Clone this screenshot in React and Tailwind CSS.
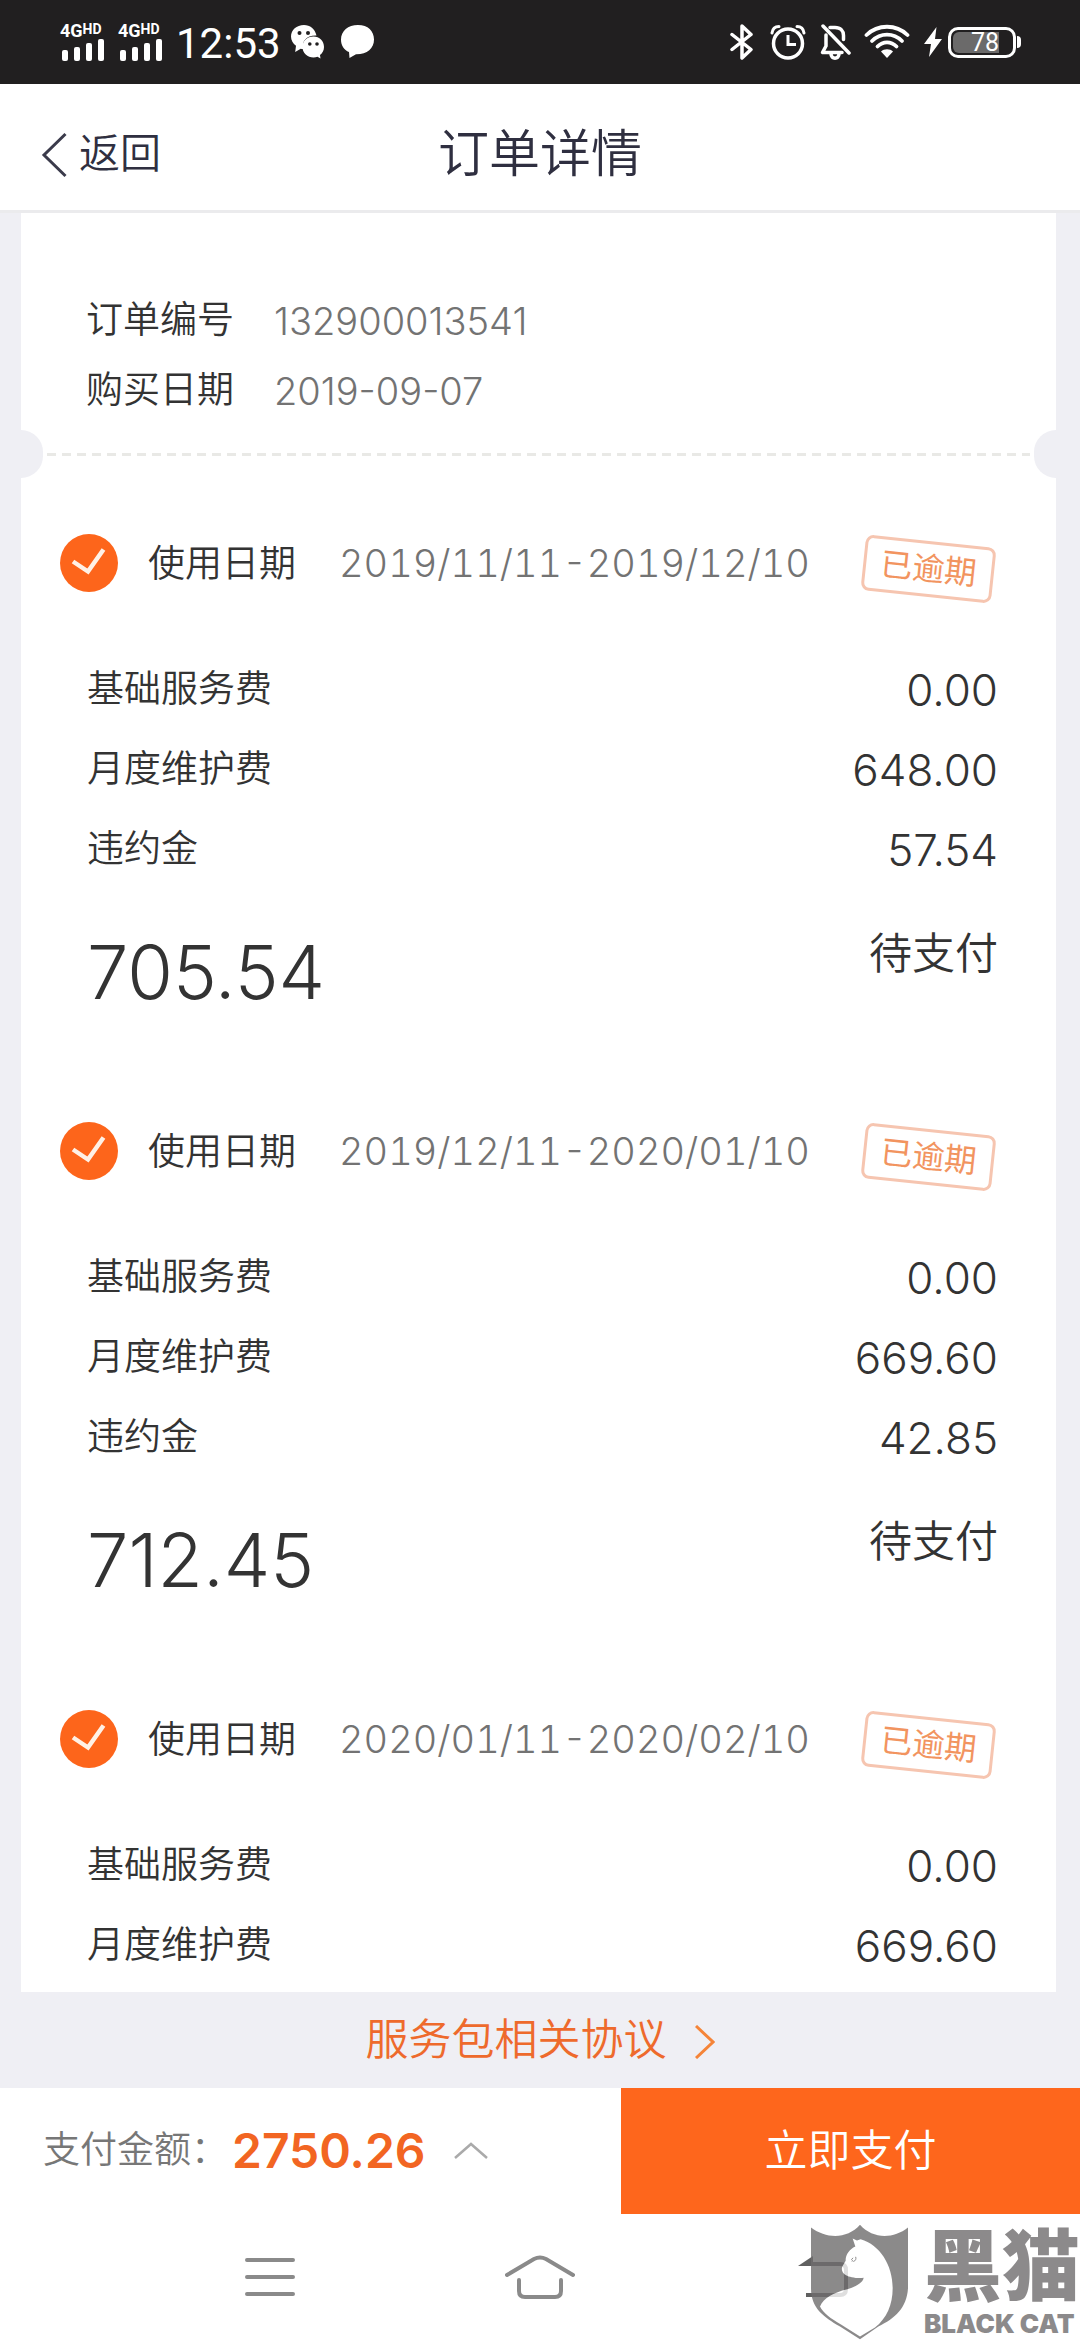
import { useState } from "react";

const orders = [
  {
    period: "2019/11/11-2019/12/10",
    fees: [
      ["基础服务费", "0.00"],
      ["月度维护费", "648.00"],
      ["违约金", "57.54"],
    ],
    total: "705.54",
  },
  {
    period: "2019/12/11-2020/01/10",
    fees: [
      ["基础服务费", "0.00"],
      ["月度维护费", "669.60"],
      ["违约金", "42.85"],
    ],
    total: "712.45",
  },
  {
    period: "2020/01/11-2020/02/10",
    fees: [
      ["基础服务费", "0.00"],
      ["月度维护费", "669.60"],
    ],
  },
];

const Signal = () => (
  <div className="flex flex-col w-12">
    <div className="flex items-start font-bold leading-none h-4">
      <span className="text-[18px] leading-4">4G</span>
      <span className="text-[14px] leading-3">HD</span>
    </div>
    <svg viewBox="0 0 44 22" className="w-11 h-[22px]" fill="white">
      <rect x="2" y="11" width="6" height="11" rx="2" />
      <rect x="14" y="8" width="6" height="14" rx="2" />
      <rect x="26" y="4" width="6" height="18" rx="2" />
      <rect x="38" y="0" width="6" height="22" rx="2" />
    </svg>
  </div>
);

const StatusBar = () => (
  <div className="h-[84px] shrink-0 bg-[#211f20] text-white font-normal flex items-center justify-between pl-[60px] pr-[59px]">
    <div className="flex items-center">
      <div className="flex gap-[10px]">
        <Signal />
        <Signal />
      </div>
      <span className="text-[42px] leading-none ml-[10px] pt-1">12:53</span>
      {/* WeChat */}
      <svg viewBox="0 0 34 34" className="w-[34px] h-[34px] ml-[10px]">
        <path fill="white" d="M13 0C5.500 0 0 5 0 11.500c0 4 2 7 5 9.200L4.200 27l5.500-3.200c1 .2 2 .3 3 .2C10 16 16 10 25.500 10.500 24 4 19 0 13 0z" />
        <path fill="white" d="M22.500 11.500C16 11.500 11.500 16 11.500 22s5 10.500 11 10.500c1.500 0 2.800-.2 4-.7l3 1.700-.5-3.500c2.500-1.900 4-4.600 4-8 0-6-4.500-10.500-10.500-10.500z" />
        <g fill="#211f20">
          <circle cx="8.500" cy="8" r="2" />
          <circle cx="17" cy="8" r="2" />
          <circle cx="18.800" cy="19" r="1.800" />
          <circle cx="26" cy="19" r="1.800" />
        </g>
      </svg>
      {/* Message bubble */}
      <svg viewBox="0 0 34 34" className="w-[34px] h-[34px] ml-4" fill="white">
        <path d="M17 0C7 0 0 6 0 14.500c0 6 3 10.500 8 12.500l.5 6L15 29.300C26 29.500 33 23.500 33 14.500 33 6 27 0 17 0z" />
      </svg>
    </div>

    <div className="flex items-center">
      <svg viewBox="0 0 24 36" className="w-6 h-9" fill="none" stroke="white" strokeWidth="3.500" strokeLinecap="round" strokeLinejoin="round">
        <path d="M2 10.500L21 25.500L12 34V2L21 10.500L2 25.500" />
      </svg>
      <svg viewBox="0 0 36 36" className="w-9 h-9 ml-4" fill="none" stroke="white" strokeWidth="3.500">
        <circle cx="18" cy="19.500" r="14.500" />
        <path d="M18 11v9.500h8" strokeWidth="3" />
        <path d="M2 9C2.500 5 5 2.500 9 2.500M27 2.500C31 2.500 33.500 5 34 9" strokeLinecap="round" strokeWidth="3" />
      </svg>
      <svg viewBox="0 0 32 36" className="w-8 h-9 ml-[14px]" fill="none" stroke="white" strokeWidth="3.500" strokeLinecap="round" strokeLinejoin="round">
        <path d="M3 2l26 27" />
        <path d="M10 3.500h5c5.500 0 8.500 3.500 8.500 8v4M6 11v11l-3.500 6.500H22" />
        <path d="M11 30c0 5.500 8 5.500 8 0" />
      </svg>
      <svg viewBox="0 0 46 36" className="w-[46px] h-9 ml-3" fill="none" stroke="white" strokeWidth="3.800" strokeLinecap="round">
        <path d="M2.500 11C14 0 32 0 43.500 11" />
        <path d="M8 17C16.500 8.500 29.500 8.500 38 17" />
        <path d="M13.500 22.500C19 17 27 17 32.500 22.500" />
        <path d="M23 34l-6-6.500c3-3 9-3 12 0z" fill="white" stroke="none" />
      </svg>
      <svg viewBox="0 0 18 30" className="w-[18px] h-[30px] ml-[14px]" fill="white">
        <path d="M12.500 0L0 17h7l-2 13L18 12h-7z" />
      </svg>
      <div className="flex items-center ml-[6px]">
        <div className="w-[68px] h-[31px] border-[3px] border-white rounded-[10px] p-[2px]">
          <div className="w-[46px] h-full bg-[#6b6a6a] rounded-l-[6px] flex items-center justify-end text-[25px] leading-none">
            78
          </div>
        </div>
        <div className="w-1 h-3 ml-px bg-white rounded-r-full" />
      </div>
    </div>
  </div>
);

const OrderItem = ({ order }) => {
  const [checked, setChecked] = useState(true);

  return (
    <section className="pl-[39px] pr-[58px] pb-24">
      <div className="h-[58px] flex items-center">
        <label className="flex items-center">
          <span className="grid w-[58px] h-[58px]">
            <input
              type="checkbox"
              checked={checked}
              onChange={(e) => setChecked(e.target.checked)}
              className="peer col-start-1 row-start-1 appearance-none rounded-full border-2 border-gray-300 checked:border-0 checked:bg-[#fd651b]"
            />
            <svg viewBox="0 0 58 58" className="col-start-1 row-start-1 pointer-events-none opacity-0 peer-checked:opacity-100" fill="none" stroke="#fff1e6" strokeWidth="4.500">
              <path d="M13 27.500L28 37.500L43.500 15.500" />
            </svg>
          </span>
          <span className="ml-[30px] pt-1 text-[37px] text-[#333]">使用日期</span>
        </label>
        <span className="ml-[43px] text-[38px] text-[#737373] font-[Inter] tabular-nums">{order.period}</span>
        <span className="ml-auto mr-1 mt-3 w-[131px] h-[56px] shrink-0 rotate-6 flex items-center justify-center border-[3px] border-[#f6c5b0] rounded-lg text-[32px] leading-none font-normal text-[#f2945f]">
          已逾期
        </span>
      </div>

      <dl className="mt-[58px] pl-[27px]">
        {order.fees.map(([name, value]) => (
          <div key={name} className="h-20 flex items-center justify-between text-[#333]">
            <dt className="text-[37px]">{name}</dt>
            <dd className="text-[44px] font-[Inter]">{value}</dd>
          </div>
        ))}
      </dl>

      {order.total && (
        <div className="mt-7 pl-[27px] flex items-start justify-between text-[#333]">
          <span className="text-[74px] leading-[108px] font-[Inter]">{order.total}</span>
          <span className="text-[43px] leading-[72px]">待支付</span>
        </div>
      )}
    </section>
  );
};

// Black Cat shield mark with its wordmark
const BlackCat = () => (
  <div className="absolute right-0 bottom-0 flex items-end text-[#8c8a8b]">
    <svg viewBox="150 130 300 350" className="w-[100px] h-[117px] opacity-80">
      <path fill="#6f6d6e" d="M153 143C200 178 262 178 300 135C338 178 400 178 444 143V325C440 385 405 415 355 440L300 478L240 440C190 410 153 385 153 325z" />
      <path fill="#fff" d="M278 176L291 182L302 178C360 195 398 255 398 325C398 375 380 415 345 443L300 470L243 434C212 416 190 400 180 380C190 355 220 338 262 328C288 320 308 310 311 294C290 296 268 292 258 286C247 280 243 270 247 260L257 243C256 225 268 208 286 200z" />
      <path fill="none" stroke="#6f6d6e" strokeWidth="3" d="M274 240l5-6M280 245c7-2 9-8 7-14M275 244l4-2" />
    </svg>
    <div className="ml-[14px] flex flex-col">
      <span className="text-[78px] leading-[78px] font-black">黑猫</span>
      <span className="text-[26px] leading-8 font-black font-[Inter]">BLACK CAT</span>
    </div>
  </div>
);

const App = () => {
  return (
    <div className="h-screen flex flex-col overflow-hidden bg-[#efeff4] font-[350] font-['Roboto','Noto_Sans_CJK_SC',sans-serif]">
      <StatusBar />

      {/* Header */}
      <header className="h-[129px] shrink-0 pt-4 bg-white border-b-[3px] border-[#ebebed] grid grid-cols-3 items-center text-[#2f2f40]">
        <button className="flex items-center pl-[41px] text-[41px]">
          <svg viewBox="0 0 26 46" className="w-[26px] h-[46px]" fill="none" stroke="#3b3b4b" strokeWidth="3">
            <path d="M24.500 2L3 23L24.500 44" />
          </svg>
          <span className="ml-3">返回</span>
        </button>
        <h1 className="text-center text-[51px]">订单详情</h1>
      </header>

      {/* Order card */}
      <main className="flex-1 min-h-0 overflow-hidden ml-[21px] mr-6 bg-white">
        <dl className="pt-[73px] pl-[65px]">
          <div className="h-[70px] flex items-center">
            <dt className="text-[37px] text-[#333]">订单编号</dt>
            <dd className="ml-10 text-[38px] text-[#737373] font-[Inter]">132900013541</dd>
          </div>
          <div className="h-[70px] flex items-center">
            <dt className="text-[37px] text-[#333]">购买日期</dt>
            <dd className="ml-10 text-[38px] text-[#737373] font-[Inter]">2019-09-07</dd>
          </div>
        </dl>

        {/* Ticket tear line */}
        <div className="flex items-center mt-1 mb-14">
          <div className="w-[22px] h-12 bg-[#efeff4] rounded-r-full" />
          <svg className="flex-1 h-[3px] mx-1">
            <line x1="0" y1="1.500" x2="100%" y2="1.500" stroke="#e9e9e6" strokeWidth="3" strokeDasharray="9 6" />
          </svg>
          <div className="w-[22px] h-12 bg-[#efeff4] rounded-l-full" />
        </div>

        {orders.map((order) => (
          <OrderItem key={order.period} order={order} />
        ))}
      </main>

      <a href="#agreement" className="h-24 shrink-0 flex items-center justify-center text-[43px] text-[#ee6a2c]">
        服务包相关协议
        <svg viewBox="0 0 20 34" className="w-5 h-[34px] ml-7 mt-1" fill="none" stroke="#f58438" strokeWidth="3">
          <path d="M1 1L18 17L1 33" />
        </svg>
      </a>

      {/* Pay bar */}
      <div className="h-[126px] shrink-0 flex bg-white">
        <div className="flex-1 flex items-center pl-[43px]">
          <span className="text-[37px] text-[#777]">支付金额：</span>
          <span className="ml-1 text-[48px] font-semibold text-[#f26522] font-[Inter]">2750.26</span>
          <button aria-label="展开明细" className="ml-7">
            <svg viewBox="0 0 34 18" className="w-[34px] h-[18px]" fill="none" stroke="#aaa" strokeWidth="2.500">
              <path d="M1 16L17 2L33 16" />
            </svg>
          </button>
        </div>
        <button className="w-[459px] bg-[#fe661c] text-white text-[43px]">立即支付</button>
      </div>

      {/* System navigation */}
      <nav className="relative h-[126px] shrink-0 px-[135px] bg-white grid grid-cols-3 items-center justify-items-center">
        <button aria-label="菜单">
          <svg viewBox="0 0 50 44" className="w-[50px] h-11" stroke="#8a8a8a" strokeWidth="4" strokeLinecap="round">
            <path d="M2 5H48M2 22H48M2 39H48" />
          </svg>
        </button>
        <button aria-label="主页">
          <svg viewBox="0 0 70 44" className="w-[70px] h-11" fill="none" stroke="#8a8a8a" strokeWidth="4" strokeLinecap="round">
            <path d="M2 20L29 4Q35 1 41 4L68 20" />
            <path d="M14 25V36Q14 42 20 42H50Q56 42 56 36V25" />
          </svg>
        </button>
        <button aria-label="返回上一页">
          <svg viewBox="-26 0 76 44" className="w-[76px] h-11" fill="none" stroke="#606060" strokeWidth="4">
            <path d="M8 9H42Q48 9 48 15V34Q48 40 42 40H8" />
            <path d="M0 11L15 1V11z" fill="#606060" stroke="none" />
          </svg>
        </button>
        <BlackCat />
      </nav>
    </div>
  );
};

export default App;
